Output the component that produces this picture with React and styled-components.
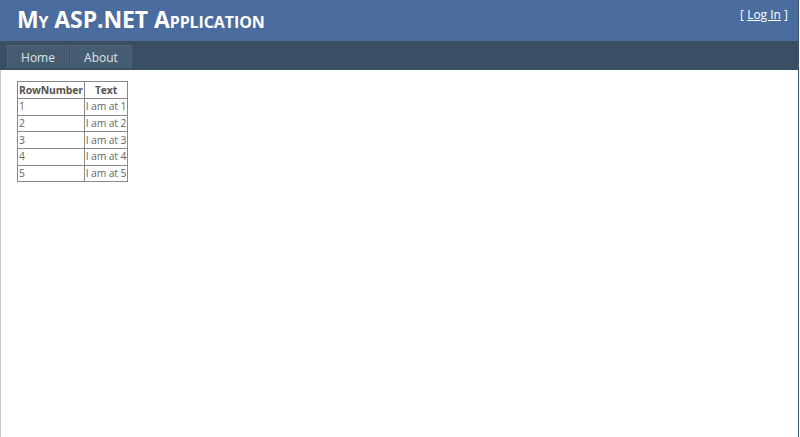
import React from 'react';
import styled, { createGlobalStyle } from 'styled-components';

const GlobalStyle = createGlobalStyle`
  html, body {
    margin: 0;
    padding: 0;
    background: #fff;
    height: 100%;
  }
  body {
    font-family: "Open Sans", "Noto Sans", "Liberation Sans", sans-serif;
    font-size: 12px;
    color: #696969;
  }
  #root {
    height: 100%;
  }
`;

const rows = [1, 2, 3, 4, 5].map(n => ({ num: n, text: `I am at ${n}` }));

export default function App() {
  return (
    <>
      <GlobalStyle />
      <StPage>
        <StHeader>
          <StTitle>My ASP.NET Application</StTitle>
          <StLogin>
            [ <StLoginLink href="#">Log In</StLoginLink> ]
          </StLogin>
        </StHeader>

        <StMenuBar>
          <StMenu>
            <StMenuItem href="#">Home</StMenuItem>
            <StMenuItem href="#">About</StMenuItem>
          </StMenu>
        </StMenuBar>

        <StMain>
          <StTable>
            <thead>
              <tr>
                <StTh>RowNumber</StTh>
                <StTh>Text</StTh>
              </tr>
            </thead>
            <tbody>
              {rows.map(r => (
                <tr key={r.num}>
                  <StTd>{r.num}</StTd>
                  <StTd>{r.text}</StTd>
                </tr>
              ))}
            </tbody>
          </StTable>
        </StMain>
      </StPage>
    </>
  );
}

const StPage = styled.div`
  display: flex;
  flex-direction: column;
  width: 798px;
  height: 100%;
  border-right: 1px solid #3d5266;
  box-sizing: content-box;
`;

const StHeader = styled.div`
  display: flex;
  justify-content: space-between;
  align-items: flex-start;
  height: 41px;
  background: #4b6c9e;
  box-sizing: border-box;
  padding: 0 0 0 17px;
`;

const StTitle = styled.h1`
  margin: 0;
  padding-top: 4px;
  font-family: "Open Sans", "Noto Sans", "Liberation Sans", sans-serif;
  font-size: 23px;
  font-weight: 700;
  font-variant: small-caps;
  color: #fff;
  letter-spacing: -0.1px;
  line-height: 30px;
`;

const StLogin = styled.div`
  padding: 7px 10px 0 0;
  font-size: 12px;
  color: #fff;
  line-height: 16px;
`;

const StLoginLink = styled.a`
  color: #fff;
  text-decoration: underline;
`;

const StMenuBar = styled.div`
  display: flex;
  height: 29px;
  background: #3a4f63;
  padding: 4px 0 0 7px;
  box-sizing: border-box;
`;

const StMenu = styled.div`
  display: flex;
  height: 23px;
`;

const StMenuItem = styled.a`
  display: flex;
  align-items: center;
  justify-content: center;
  width: 62px;
  background: #465c71;
  border: 1px solid #4f6377;
  border-bottom: none;
  margin-right: 1px;
  color: #dde4ec;
  text-decoration: none;
  font-size: 12px;
  box-sizing: border-box;
  padding-top: 1px;
`;

const StMain = styled.div`
  flex: 1;
  background: #fff;
  border-left: 1px solid #c8c8c8;
  padding: 11px 0 0 16px;
`;

const StTable = styled.table`
  border-collapse: collapse;
  border: 1px solid #888;
  font-size: 10.4px;
  letter-spacing: -0.15px;
  color: #666;
`;

const StTh = styled.th`
  border: 1px solid #888;
  padding: 0 1px;
  height: 16px;
  font-weight: 700;
  color: #555;
  text-align: center;
  line-height: 15px;
`;

const StTd = styled.td`
  border: 1px solid #888;
  padding: 0 1px;
  height: 15.7px;
  line-height: 15px;
  text-align: left;
`;
